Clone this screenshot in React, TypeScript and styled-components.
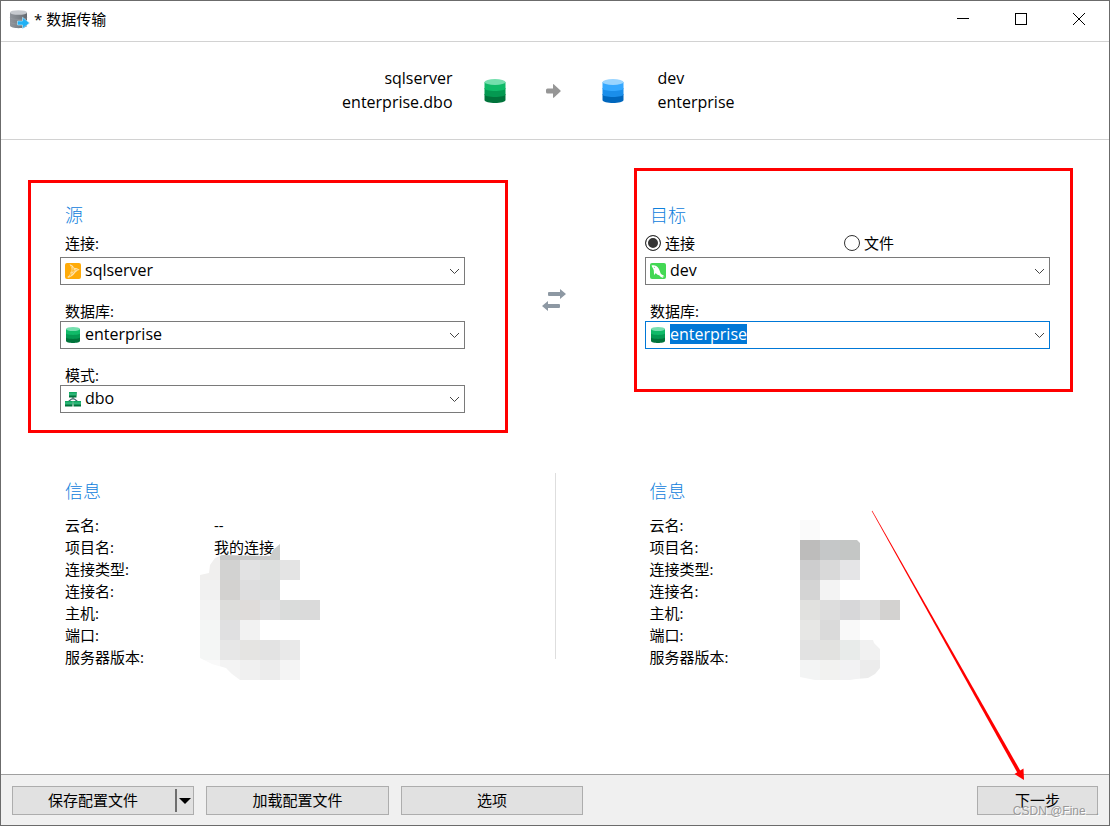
import React from 'react';
import styled, { createGlobalStyle, css } from 'styled-components';

const GlobalStyle = createGlobalStyle`
  *, *::before, *::after { box-sizing: border-box; }
  body {
    margin: 0;
    background: #fff;
    color: #000;
    font: 15px/20px 'Open Sans', 'Noto Sans CJK SC', sans-serif;
  }
  button, select, input { font: inherit; color: inherit; margin: 0; }
`;

const Window = styled.div`
  position: relative;
  display: flex;
  flex-direction: column;
  min-height: 100vh;
  border: 1px solid #6b6b6b;
`;

const TitleBar = styled.header`
  display: flex;
  align-items: center;
  height: 41px;
  padding: 0 1px 4px 8px;
  border-bottom: 1px solid #d2d2d2;
`;

const Title = styled.h1`
  flex: 1;
  margin: 0 0 0 4px;
  font-size: 15px;
  font-weight: 400;
`;

const WindowButton = styled.button`
  display: grid;
  place-items: center;
  width: 58px;
  height: 36px;
  padding: 0;
  border: 0;
  background: transparent;
  &:hover { background: #e5e5e5; }
`;

const Summary = styled.section`
  display: grid;
  grid-template-columns: 1fr auto 1fr;
  align-items: center;
  height: 98px;
  padding-bottom: 2px;
  border-bottom: 1px solid #d2d2d2;
  font-size: 16px;
  line-height: 24px;
`;

const Endpoint = styled.div<{ $end?: boolean }>`
  text-align: ${(p) => (p.$end ? 'right' : 'left')};
`;

const Flow = styled.div`
  display: flex;
  align-items: center;
  gap: 39px;
  padding: 2px 33px 0 30px;
`;

const Main = styled.main`
  flex: 1;
  display: flex;
  flex-direction: column;
  gap: 40px;
  padding-top: 28px;
`;

const Selection = styled.div`
  display: grid;
  grid-template-columns: 480fr 126px 439fr;
  align-items: start;
  padding: 0 36px 0 27px;
`;

const SourcePanel = styled.section`
  margin-top: 12px;
  padding: 20px 40px 17px 29px;
  border: 3px solid #f00;
`;

const TargetPanel = styled.section`
  padding: 32px 20px 40px 8px;
  border: 3px solid #f00;
`;

const SectionTitle = styled.h2`
  margin: 0;
  font-size: 18px;
  line-height: 24px;
  font-weight: 300;
  color: #0f80dc;
`;

const PanelTitle = styled(SectionTitle)`
  margin-bottom: 6px;
  padding-left: 5px;
`;

const Field = styled.div<{ $first?: boolean }>`
  margin-top: ${(p) => (p.$first ? 0 : 16)}px;
`;

const FieldLabel = styled.label<{ $first?: boolean }>`
  display: block;
  padding-left: 5px;
  margin-bottom: ${(p) => (p.$first ? 4 : 0)}px;
`;

const Combo = styled.div<{ $active?: boolean }>`
  display: flex;
  align-items: center;
  gap: 4px;
  height: 28px;
  padding: 0 4px;
  border: 1px solid ${(p) => (p.$active ? '#0078d7' : '#7a7a7a')};
  background: #fff;
  svg { flex: none; }
`;

const ComboSelect = styled.select<{ $active?: boolean }>`
  appearance: none;
  flex: 1;
  min-width: 0;
  height: 20px;
  margin-bottom: 2px;
  padding: 0;
  border: 0;
  outline: 0;
  background: transparent;
  font-size: 16px;
  line-height: 20px;
  ${(p) =>
    p.$active &&
    css`
      flex: none;
      field-sizing: content;
      margin-right: auto;
      background: #0078d7;
      color: #fff;
    `}
`;

const SwapButton = styled.button`
  justify-self: start;
  margin: 120px 0 0 34px;
  padding: 0;
  width: 24px;
  height: 24px;
  border: 0;
  background: transparent;
  svg { display: block; }
`;

const RadioRow = styled.div`
  display: flex;
  margin-bottom: 4px;
`;

const RadioLabel = styled.label`
  display: flex;
  align-items: center;
  gap: 4px;
  min-width: 199px;
`;

const Radio = styled.input`
  appearance: none;
  width: 16px;
  height: 16px;
  border: 1px solid #333;
  border-radius: 50%;
  background: #fff;
  &:checked {
    background: #333;
    box-shadow: inset 0 0 0 2px #fff;
  }
`;

const Information = styled.div`
  display: grid;
  grid-template-columns: 1fr 1px 1fr;
  align-items: start;
`;

const InfoPanel = styled.section<{ $indent: number }>`
  position: relative;
  margin-left: ${(p) => p.$indent}px;
  padding-top: 6px;
`;

const Divider = styled.div`
  height: 186px;
  background: #dedede;
`;

const InfoList = styled.dl`
  display: grid;
  grid-template-columns: 149px 1fr;
  grid-auto-rows: 22px;
  margin: 11px 0 0;
  line-height: 22px;
  dt, dd { margin: 0; }
`;

const MosaicSvg = styled.svg<{ $left: number; $top: number }>`
  position: absolute;
  left: ${(p) => p.$left}px;
  top: ${(p) => p.$top}px;
`;

const Footer = styled.footer`
  position: relative;
  display: flex;
  gap: 12px;
  padding: 11px 11px 10px;
  border-top: 1px solid #a0a0a0;
  background: #f0f0f0;
`;

const buttonFace = css`
  height: 29px;
  border: 1px solid #adadad;
  background: #e1e1e1;
`;

const PushButton = styled.button<{ $width?: number }>`
  ${buttonFace}
  width: ${(p) => p.$width ?? 182}px;
  padding: 0 0 2px;
`;

const NextButton = styled(PushButton)`
  margin-left: auto;
`;

const SplitButton = styled.div`
  ${buttonFace}
  display: flex;
  align-items: center;
  width: 182px;
`;

const SplitMain = styled.button`
  flex: 1;
  padding: 0 2px 2px 0;
  border: 0;
  background: transparent;
`;

const SplitArrow = styled.button`
  display: grid;
  place-items: center;
  width: 18px;
  height: 23px;
  padding: 0;
  border: 0;
  border-left: 2px solid #6e6e6e;
  background: transparent;
`;

const Watermark = styled.span`
  position: absolute;
  right: 10px;
  bottom: 4px;
  font: 12px/20px 'Liberation Sans', sans-serif;
  white-space: pre;
  color: #999;
  text-shadow: 1px 1px 0 #fff;
  pointer-events: none;
`;

const Pointer = styled.svg`
  position: absolute;
  right: 79px;
  bottom: 43px;
  pointer-events: none;
`;

const greens = ['#75dfae', '#10ba68', '#049951', '#00733b'];
const blues = ['#9ad5ff', '#35a8ff', '#1a8eea', '#0067bd'];

function Cylinder({ size, tones }: { size: number; tones: string[] }) {
  return (
    <svg width={size} height={size} viewBox="0 0 24 24" aria-hidden="true">
      <path d="M1.500 15v6c0 4 21 4 21 0v-6z" fill={tones[3]} />
      <path d="M1.500 9v6.500c0 3.300 21 3.300 21 0V9z" fill={tones[2]} />
      <path d="M1.500 3v6.500c0 3.300 21 3.300 21 0V3z" fill={tones[1]} />
      <ellipse cx="12" cy="3" rx="10.500" ry="3" fill={tones[0]} />
    </svg>
  );
}

function TransferIcon() {
  return (
    <svg width="21" height="21" viewBox="0 0 21 21" aria-hidden="true">
      <defs>
        <linearGradient id="steel">
          <stop offset="0" stopColor="#8f949b" />
          <stop offset="0.500" stopColor="#7d8389" />
          <stop offset="1" stopColor="#62686f" />
        </linearGradient>
      </defs>
      <path d="M1 3.500v13c0 3.500 17 3.500 17 0v-13z" fill="url(#steel)" />
      <path d="M1 8.500c0 2.600 17 2.600 17 0M1 13c0 2.600 17 2.600 17 0" fill="none" stroke="#999ea5" strokeWidth="0.500" />
      <ellipse cx="9.500" cy="3.500" rx="8.500" ry="2.300" fill="#c6cacf" />
      <path d="M8.500 12h5V8.300l7 5.700-7 5.700V16h-5z" fill="#21b1f5" stroke="#c9edfd" strokeWidth="0.600" strokeLinejoin="round" />
    </svg>
  );
}

function SqlServerIcon() {
  return (
    <svg width="16" height="16" viewBox="0 0 16 16" aria-hidden="true">
      <rect width="16" height="16" rx="2" fill="#ffab08" />
      <path d="M4.500 1.200c2.300.4 4 1.600 4.300 3.500 2.200.1 4.200.8 6 2.300-1.800-.2-2.500.8-3.800 2-1.500.7-1.500 3.500-7.500 5.800-1.500-.3-1.200-1-.3-1.500C5.800 11.500 4.500 10 6 8.500 7.500 6.500 6 3.500 4.500 1.200z" fill="#ffe3ab" />
      <path d="M6 3c1.800 2 1.500 3.500 1 5.500M6.500 8.300l6-2M5.500 12l4-3.500M8.700 5l-.7 4M5 13.500l1-4" stroke="#ffab08" strokeWidth="0.600" fill="none" />
    </svg>
  );
}

function MySqlIcon() {
  return (
    <svg width="16" height="16" viewBox="0 0 16 16" aria-hidden="true">
      <rect width="16" height="16" rx="2" fill="#43d854" />
      <path d="M1.500 2.500c2.800-.8 5.500.3 7 2.700 1.300 2 1.500 4 2.500 5.800l3.700 2.300-2.200.1 1 1.500c-2-.3-3.300-1.300-4.300-2.600-1.500-.3-2.700-1-3.500-2.300L4.500 12c-.8-1.500-.5-3-.7-4.500C3.600 5.500 2 4.500 1.500 2.500z" fill="#fff" />
      <circle cx="4.300" cy="4.200" r="0.500" fill="#43d854" />
    </svg>
  );
}

function SchemaIcon() {
  const blocks = [[4, 1], [0, 10], [8.5, 10]];
  return (
    <svg width="16" height="16" viewBox="0 0 16 16" aria-hidden="true">
      <path d="M8 6v1.500M3.500 10.500L6.500 8h3l3 2.500" fill="none" stroke="#3f5f66" strokeWidth="1.200" />
      {blocks.map(([x, y]) => (
        <g key={`${x}-${y}`}>
          <rect x={x} y={y} width="7.500" height="5.500" fill="#00733b" />
          <rect x={x} y={y} width="7.500" height="3.500" fill="#2fb679" />
          <rect x={x} y={y} width="7.500" height="1.300" fill="#10a860" />
        </g>
      ))}
    </svg>
  );
}

function Chevron() {
  return (
    <svg width="12" height="12" viewBox="0 0 12 12" aria-hidden="true">
      <path d="M2 4L6.500 8.500 11 4" fill="none" stroke="#444" />
    </svg>
  );
}

interface ComboFieldProps {
  id: string;
  value: string;
  icon: React.ReactNode;
  label?: string;
  ariaLabel?: string;
  first?: boolean;
  active?: boolean;
}

function ComboField({ id, value, icon, label, ariaLabel, first, active }: ComboFieldProps) {
  return (
    <Field $first={first}>
      {label && <FieldLabel htmlFor={id} $first={first}>{label}</FieldLabel>}
      <Combo $active={active}>
        {icon}
        <ComboSelect id={id} aria-label={ariaLabel} $active={active} defaultValue={value}>
          <option>{value}</option>
        </ComboSelect>
        <Chevron />
      </Combo>
    </Field>
  );
}

type Cells = string[][];

const sourceCells: Cells = [
  ['#f0efef', '#c6c6c6', '#c8c8c8', '#cbcdcc'],
  ['#f0efee', '#d2d2d1', '#e2e2e3', '#dddfde', '#e4e4e4'],
  ['#f1f1f1', '#d3d2d0', '#dededf', '#dcdddd'],
  ['#f3f3f3', '#dddddb', '#dfdcda', '#e1e1e2', '#dadcdb', '#dadada'],
  ['#f4f6f5', '#e0e0e1', '#f2f2f2'],
  ['#f4f6f5', '#e7e7e7', '#e5e4e2', '#e3e3e3', '#e9e9e9'],
  ['#f9f9f9', '#f3f3f3', '#f0f0f0', '#ececec', '#f4f4f4'],
];

const targetCells: Cells = [
  ['#fafafa'],
  ['#bdbcbb', '#c5c7c8', '#c4c6c5'],
  ['#cdcdce', '#d9d9d9', '#e5e5e7'],
  ['#d4d4d4', '#f3f3f3'],
  ['#e1e1df', '#dddddd', '#d7d7d9', '#e0e0e0', '#d3d2d0'],
  ['#e7e7e5', '#dadada', '#f9f9f9'],
  ['#e2e2e2', '#e2e2e0', '#e8ebea', '#f1f1f1'],
  ['#f3f4f4', '#f2f2f0', '#f2f2f3', '#ececec'],
];

const sourceShape = 'M0 35l9-2 1-8 5-7 7-3 48 1 3-6 7-6v16h60v120H40l-8-6-6-6-14-4-12-6z';
const targetShape = 'M0 0h20v20h37l3 3v57h60v40H73l1 3 6 6v19l-5 6-7 4-12 1-12 2H20L0 157z';

function Mosaic({ id, cells, shape, left, top }: { id: string; cells: Cells; shape: string; left: number; top: number }) {
  return (
    <MosaicSvg $left={left} $top={top} width="120" height={cells.length * 20} aria-hidden="true">
      <clipPath id={id}><path d={shape} /></clipPath>
      <g clipPath={`url(#${id})`} shapeRendering="crispEdges">
        {cells.map((row, y) =>
          row.map((fill, x) => <rect key={`${x}-${y}`} x={x * 20} y={y * 20} width="20" height="20" fill={fill} />),
        )}
      </g>
    </MosaicSvg>
  );
}

const infoLabels = ['云名:', '项目名:', '连接类型:', '连接名:', '主机:', '端口:', '服务器版本:'];

function Info({ indent, values, children }: { indent: number; values: string[]; children: React.ReactNode }) {
  return (
    <InfoPanel $indent={indent}>
      <SectionTitle>信息</SectionTitle>
      <InfoList>
        {infoLabels.map((label, i) => (
          <React.Fragment key={label}>
            <dt>{label}</dt>
            <dd>{values[i]}</dd>
          </React.Fragment>
        ))}
      </InfoList>
      {children}
    </InfoPanel>
  );
}

export default function App() {
  return (
    <>
      <GlobalStyle />
      <Window>
        <TitleBar>
          <TransferIcon />
          <Title>* 数据传输</Title>
          <WindowButton aria-label="最小化">
            <svg width="12" height="12"><path d="M0 5.500h12" stroke="#000" /></svg>
          </WindowButton>
          <WindowButton aria-label="最大化">
            <svg width="12" height="12"><rect x="0.500" y="0.500" width="11" height="11" fill="none" stroke="#000" /></svg>
          </WindowButton>
          <WindowButton aria-label="关闭">
            <svg width="12" height="12"><path d="M0 0l12 12M12 0L0 12" stroke="#000" /></svg>
          </WindowButton>
        </TitleBar>

        <Summary>
          <Endpoint $end>
            <div>sqlserver</div>
            <div>enterprise.dbo</div>
          </Endpoint>
          <Flow>
            <Cylinder size={24} tones={greens} />
            <svg width="16" height="16" viewBox="0 0 16 16" aria-hidden="true">
              <path d="M1.500 5.500H7V2q0-1.500 1-.5l6.500 6q.5.500 0 1L8 14.500q-1 1-1-.5v-3.500H1.500q-1.500 0-1.500-1.500V7q0-1.500 1.500-1.500z" fill="#969696" />
            </svg>
            <Cylinder size={24} tones={blues} />
          </Flow>
          <Endpoint>
            <div>dev</div>
            <div>enterprise</div>
          </Endpoint>
        </Summary>

        <Main>
          <Selection>
            <SourcePanel>
              <PanelTitle>源</PanelTitle>
              <ComboField id="source-connection" label="连接:" value="sqlserver" icon={<SqlServerIcon />} first />
              <ComboField id="source-database" label="数据库:" value="enterprise" icon={<Cylinder size={16} tones={greens} />} />
              <ComboField id="source-schema" label="模式:" value="dbo" icon={<SchemaIcon />} />
            </SourcePanel>

            <SwapButton aria-label="交换">
              <svg width="24" height="24" viewBox="0 0 24 24">
                <path d="M7 4h11V1l6 5-6 5V8H7q-1 0-1-1V5q0-1 1-1zM17 16H6v-3l-6 5 6 5v-3h11q1 0 1-1v-2q0-1-1-1z" fill="#8d98a3" />
              </svg>
            </SwapButton>

            <TargetPanel>
              <PanelTitle>目标</PanelTitle>
              <RadioRow>
                <RadioLabel><Radio type="radio" name="target" defaultChecked />连接</RadioLabel>
                <RadioLabel><Radio type="radio" name="target" />文件</RadioLabel>
              </RadioRow>
              <ComboField id="target-connection" ariaLabel="连接" value="dev" icon={<MySqlIcon />} first />
              <ComboField id="target-database" label="数据库:" value="enterprise" icon={<Cylinder size={16} tones={greens} />} active />
            </TargetPanel>
          </Selection>

          <Information>
            <Info indent={64} values={['--', '我的连接']}>
              <Mosaic id="source-mask" cells={sourceCells} shape={sourceShape} left={135} top={67} />
            </Info>
            <Divider />
            <Info indent={94} values={[]}>
              <Mosaic id="target-mask" cells={targetCells} shape={targetShape} left={150} top={47} />
            </Info>
          </Information>
        </Main>

        <Footer>
          <SplitButton>
            <SplitMain>保存配置文件</SplitMain>
            <SplitArrow aria-label="更多保存选项">
              <svg width="12" height="6"><path d="M0 0h12L6 6z" fill="#000" /></svg>
            </SplitArrow>
          </SplitButton>
          <PushButton $width={183}>加载配置文件</PushButton>
          <PushButton>选项</PushButton>
          <NextButton $width={121}>下一步</NextButton>
          <Watermark>CSDN @Fine   .</Watermark>
        </Footer>

        <Pointer width="160" height="274" viewBox="870 508 160 274" aria-hidden="true">
          <path d="M871.700 511l.6-.3L1020.500 771l-3 2z" fill="#f00" />
          <path d="M1024 780l-9.500-6 9-5.500z" fill="#f00" />
        </Pointer>
      </Window>
    </>
  );
}
